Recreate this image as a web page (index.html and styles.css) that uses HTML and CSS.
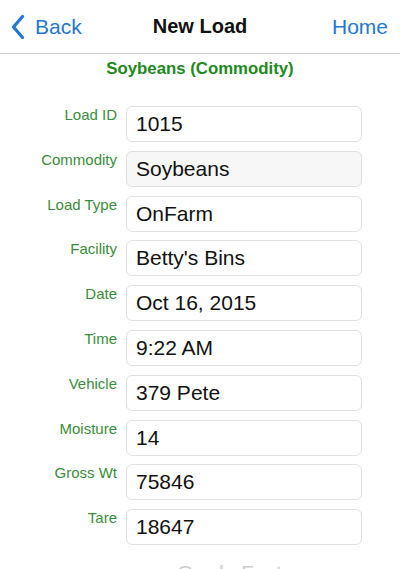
FILE: index.html
```html
<!DOCTYPE html>
<html>
<head>
<meta charset="utf-8">
<link rel="stylesheet" href="styles.css">
</head>
<body>
<div class="nav">
  <div class="back">
    <svg class="chev" width="14" height="24" viewBox="0 0 14 24"><polyline points="11.5,1.5 2.5,12 11.5,22.5" fill="none" stroke="#1f78d1" stroke-width="3.2" stroke-linecap="round" stroke-linejoin="round"/></svg>
    <span>Back</span>
  </div>
  <div class="title">New Load</div>
  <div class="home">Home</div>
</div>
<div class="subtitle">Soybeans (Commodity)</div>
<div class="form">
  <div class="row"><div class="label">Load ID</div><div class="box">1015</div></div>
  <div class="row"><div class="label">Commodity</div><div class="box disabled">Soybeans</div></div>
  <div class="row"><div class="label">Load Type</div><div class="box">OnFarm</div></div>
  <div class="row"><div class="label">Facility</div><div class="box">Betty's Bins</div></div>
  <div class="row"><div class="label">Date</div><div class="box">Oct 16, 2015</div></div>
  <div class="row"><div class="label">Time</div><div class="box">9:22 AM</div></div>
  <div class="row"><div class="label">Vehicle</div><div class="box">379 Pete</div></div>
  <div class="row"><div class="label">Moisture</div><div class="box">14</div></div>
  <div class="row"><div class="label">Gross Wt</div><div class="box">75846</div></div>
  <div class="row"><div class="label">Tare</div><div class="box">18647</div></div>
  <div class="row btnrow"><div class="label"></div><div class="button">Grade Factors</div></div>
</div>
</body>
</html>
```
FILE: styles.css
```css
html, body {
  margin: 0;
  padding: 0;
  background: #ffffff;
  font-family: "Liberation Sans", Arial, sans-serif;
  overflow: hidden;
}
.nav {
  height: 53px;
  border-bottom: 1px solid #cfcfcf;
  display: flex;
  align-items: center;
  justify-content: space-between;
  padding: 0 12px 0 11px;
  position: relative;
}
.back {
  display: flex;
  align-items: center;
  gap: 10px;
  color: #1f78d1;
  font-size: 21px;
}
.chev {
  display: block;
}
.title {
  font-size: 20px;
  font-weight: bold;
  color: #111111;
  position: absolute;
  left: 0;
  right: 0;
  text-align: center;
  pointer-events: none;
}
.home {
  color: #1f78d1;
  font-size: 21px;
}
.subtitle {
  text-align: center;
  color: #1d8a1d;
  font-weight: bold;
  font-size: 16.8px;
  line-height: 20px;
  margin-top: 5px;
}
.form {
  margin-top: 27px;
  display: flex;
  flex-direction: column;
  gap: 8.8px;
}
.row {
  display: grid;
  grid-template-columns: 117px 236px;
  column-gap: 9px;
  align-items: start;
}
.label {
  text-align: right;
  color: #3a8d3a;
  font-size: 15px;
  line-height: 18px;
}
.box {
  box-sizing: border-box;
  height: 36px;
  border: 1px solid #e0e0e0;
  border-radius: 6px;
  background: #ffffff;
  padding: 0 9px;
  font-size: 21px;
  line-height: 34px;
  color: #111111;
}
.box.disabled {
  background: #f7f7f7;
}
.btnrow {
  margin-top: 7px;
}
.button {
  text-align: center;
  color: #cccccc;
  font-size: 21px;
  line-height: 24px;
}
```
